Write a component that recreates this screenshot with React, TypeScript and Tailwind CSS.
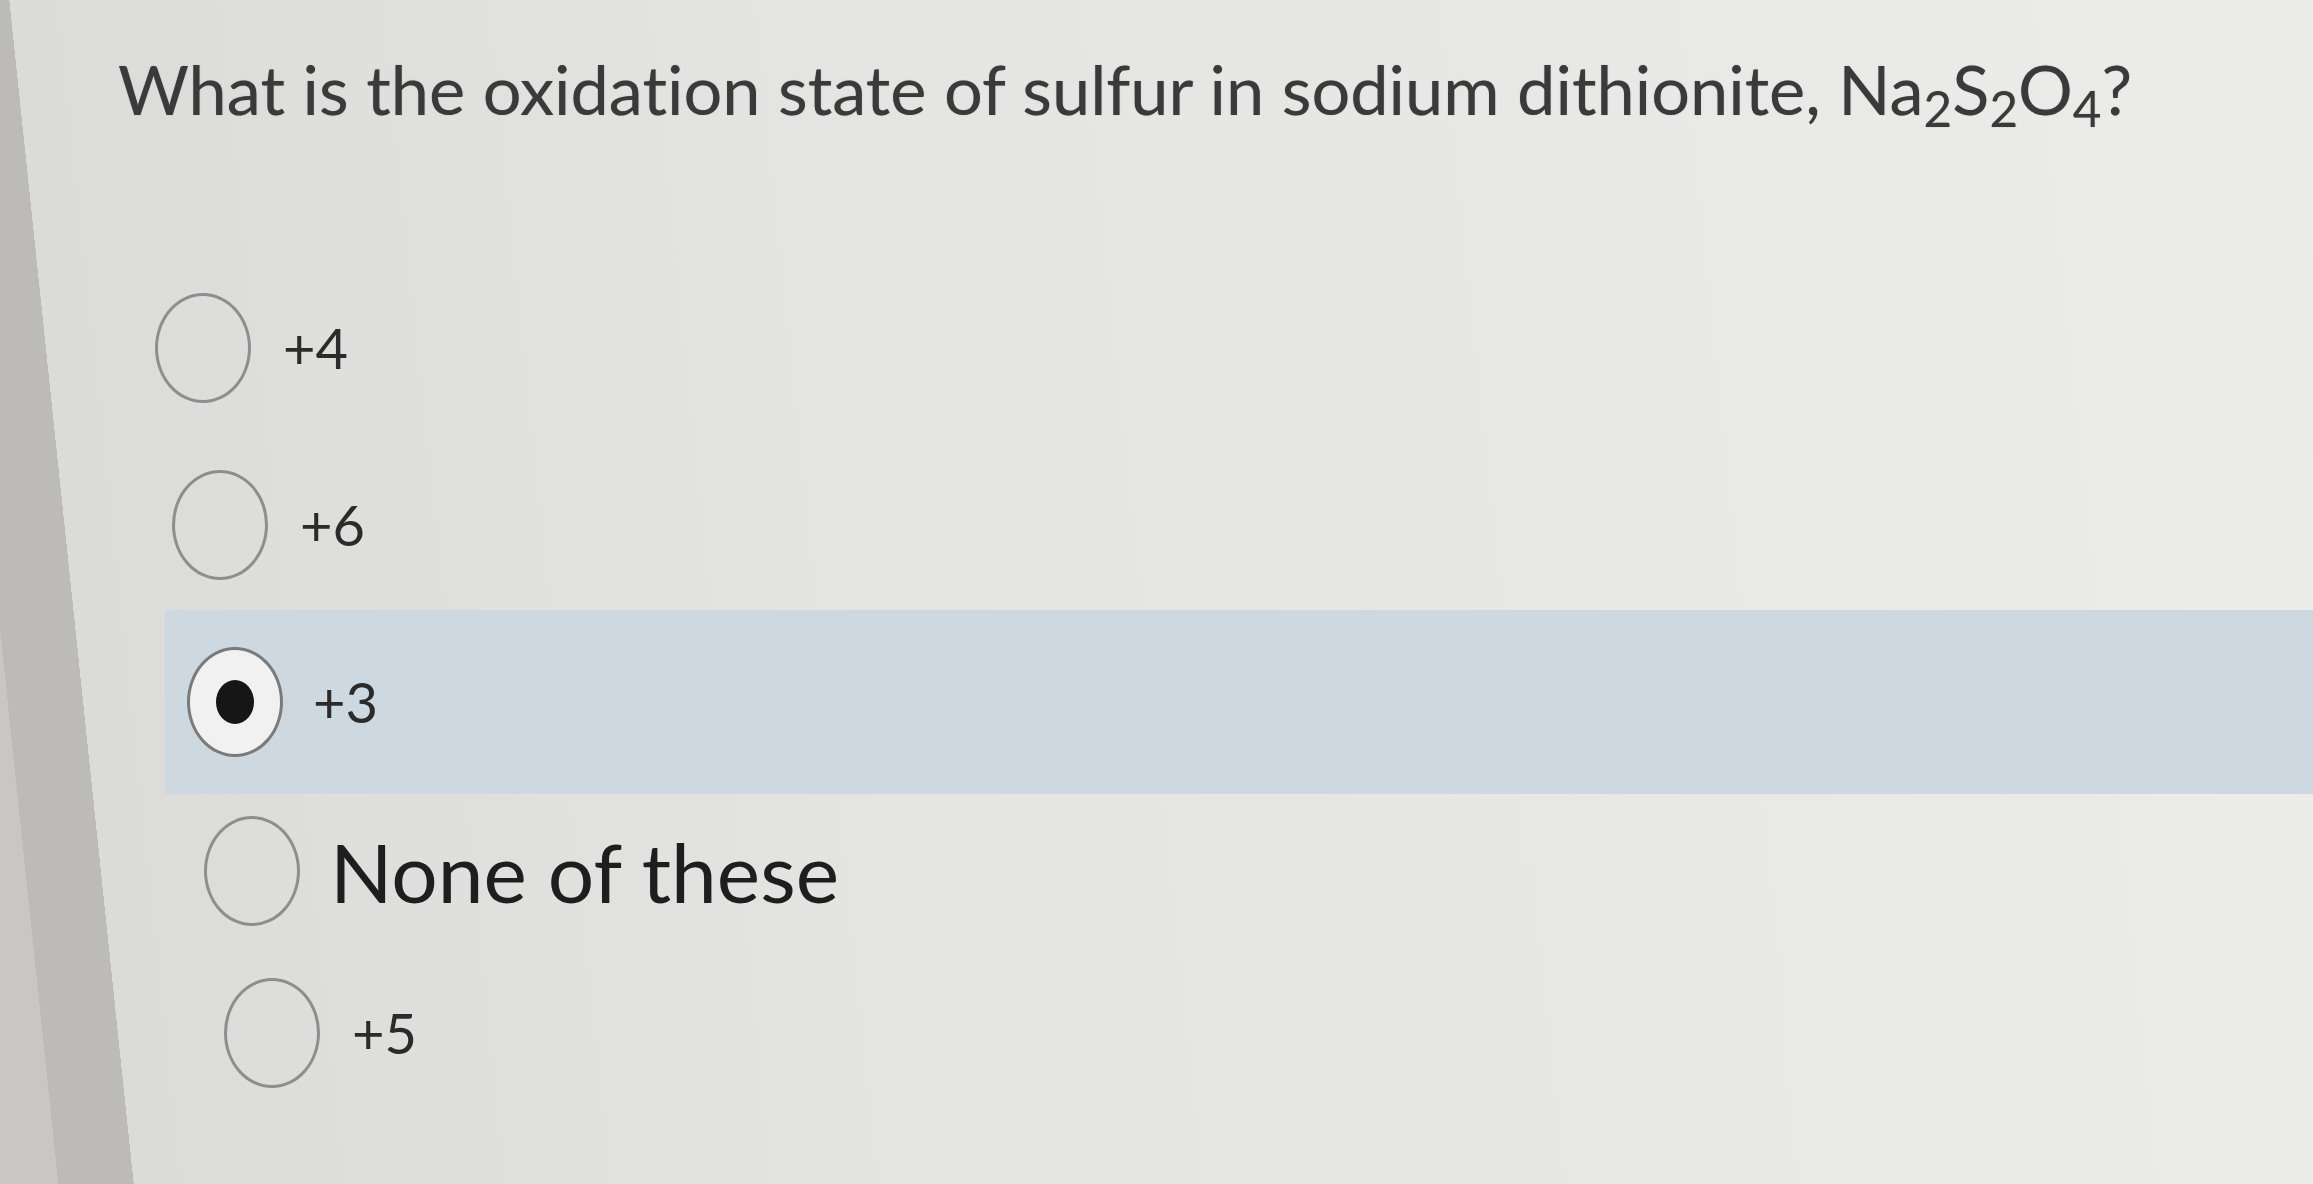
import React from 'react';

interface Choice {
  id: string;
  label: string;
  indent: string;
  row: string;
  selected?: boolean;
  large?: boolean;
}

// row heights/indents follow the screenshot, the photo is taken at a slight angle
const CHOICES: Choice[] = [
  { id: 'c1', label: '+4', indent: 'pl-[155px]', row: 'h-[177px]' },
  { id: 'c2', label: '+6', indent: 'pl-[172px]', row: 'h-[177px]' },
  { id: 'c3', label: '+3', indent: 'pl-[22px]', row: 'h-[177px]', selected: true },
  { id: 'c4', label: 'None of these', indent: 'pl-[204px]', row: 'h-[161px]', large: true },
  { id: 'c5', label: '+5', indent: 'pl-[224px]', row: 'h-[163px]' },
];

const Radio: React.FC<{ checked?: boolean }> = ({ checked }) => (
  <span
    className={`flex h-[110px] w-[96px] shrink-0 items-center justify-center rounded-[50%] border-[3px] ${
      checked ? 'border-[#7a7a7a] bg-[#f1f1f1]' : 'border-[#8e8e8e] bg-transparent'
    }`}
  >
    {checked && <span className="block h-[44px] w-[38px] rounded-[50%] bg-[#161616]" />}
  </span>
);

const App: React.FC = () => {
  return (
    <div className="min-h-screen w-full overflow-hidden bg-[linear-gradient(84deg,#c8c7c5_0px,#c8c7c5_58px,#bcbbb9_58px,#bcbbb9_133px,#dbdbd9_133px,#e4e4e3_900px,#ececeb_2419px)] pb-[40px] text-[#333] [font-family:Lato,'Liberation_Sans',sans-serif] [font-variant-ligatures:none]">
      <h1 className="pl-[118px] pt-[48px] text-[68.5px] leading-[1.2] font-normal text-[#3a3a3a] [text-shadow:0_0_1px_rgba(40,40,40,0.45)]">
        What is the oxidation state of sulfur in sodium dithionite, Na
        <sub className="text-[0.72em]">2</sub>S<sub className="text-[0.72em]">2</sub>O
        <sub className="text-[0.72em]">4</sub>?
      </h1>

      <div className="mt-[129px] flex flex-col">
        {CHOICES.map(choice =>
          choice.selected ? (
            <div key={choice.id} className={`flex items-center ${choice.row}`}>
              <label className={`ml-[165px] flex h-[184px] w-full items-center bg-[#cdd8e0] ${choice.indent}`}>
                <Radio checked />
                <span className="ml-[30px] text-[56px] leading-none text-[#2b2b2b]">{choice.label}</span>
              </label>
            </div>
          ) : (
            <label key={choice.id} className={`flex items-center ${choice.row} ${choice.indent}`}>
              <Radio />
              <span
                className={
                  choice.large
                    ? 'ml-[30px] text-[82px] leading-none text-[#1e1e1e]'
                    : 'ml-[32px] text-[56px] leading-none text-[#2b2b2b]'
                }
              >
                {choice.label}
              </span>
            </label>
          )
        )}
      </div>
    </div>
  );
};

export default App;
